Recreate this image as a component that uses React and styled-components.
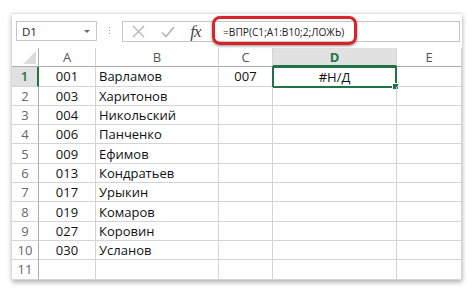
import React from "react";
import styled, { createGlobalStyle } from "styled-components";

const Global = createGlobalStyle`
  body {
    margin: 0;
    background: #fff;
    font-family: "Open Sans", "Liberation Sans", sans-serif;
  }
`;

const Page = styled.div`
  width: 474px;
  height: 293px;
  padding: 13px 0 0 12px;
  box-sizing: border-box;
  overflow: hidden;
`;

const Window = styled.div`
  width: 450px;
  background: #fff;
  box-shadow: 0 2px 5px rgba(0, 0, 0, 0.35);
`;

const Toolbar = styled.div`
  height: 35px;
  display: flex;
  align-items: flex-start;
  padding: 7px 2px 0 4px;
  box-sizing: border-box;
  border-top: 1px solid #e4e4e4;
`;

const NameBox = styled.div`
  width: 81px;
  height: 20px;
  box-sizing: border-box;
  border: 1px solid #c6c6c6;
  display: flex;
  align-items: center;
  justify-content: space-between;
  padding: 0 6px 0 5px;
  font-size: 11.5px;
  color: #222;
`;

const Caret = styled.span`
  width: 0;
  height: 0;
  border-left: 3px solid transparent;
  border-right: 3px solid transparent;
  border-top: 3px solid #666;
`;

const Dots = styled.div`
  width: 25px;
  display: flex;
  flex-direction: column;
  align-items: center;
  gap: 2px;
  padding-top: 6px;

  span {
    width: 1px;
    height: 1px;
    background: #999;
  }
`;

const FormulaBox = styled.div`
  flex: 1;
  height: 21px;
  box-sizing: border-box;
  border: 1px solid #c6c6c6;
  display: flex;
  align-items: center;
`;

const IconBtn = styled.div`
  width: ${(p) => p.$w}px;
  height: 19px;
  display: flex;
  align-items: center;
  justify-content: center;
`;

const Fx = styled.span`
  font-family: "Liberation Serif", serif;
  font-style: italic;
  font-size: 17px;
  color: #444;
  letter-spacing: -1px;
`;

const Highlight = styled.div`
  position: relative;
  margin-left: 5px;
  padding-left: 8px;
  font-size: 10.2px;
  color: #222;
  white-space: nowrap;

  &::before {
    content: "";
    position: absolute;
    left: -3px;
    top: -9px;
    width: 145px;
    height: 29px;
    box-sizing: border-box;
    border: 3px solid #d9232b;
    border-radius: 8px;
    box-shadow: 0 1px 3px rgba(0, 0, 0, 0.45);
  }
`;

const Sheet = styled.div`
  display: grid;
  grid-template-columns: 27px 57px 123px 54px 124px 1fr;
  grid-auto-rows: 19.3px;
`;

const ColHead = styled.div`
  display: flex;
  align-items: center;
  justify-content: center;
  font-size: 13px;
  color: ${(p) => (p.$active ? "#217346" : "#555")};
  font-weight: ${(p) => (p.$active ? 700 : 400)};
  background: ${(p) => (p.$active ? "#e1e1e1" : "#fff")};
  border-right: 1px solid #d4d4d4;
  border-bottom: ${(p) => (p.$active ? "2px solid #217346" : "1px solid #ababab")};
  box-sizing: border-box;
`;

const Corner = styled.div`
  position: relative;
  border-right: 1px solid #ababab;
  border-bottom: 1px solid #ababab;
  box-sizing: border-box;

  &::after {
    content: "";
    position: absolute;
    right: 2px;
    bottom: 2px;
    border-left: 13px solid transparent;
    border-bottom: 13px solid #dcdcdc;
  }
`;

const RowHead = styled.div`
  display: flex;
  align-items: center;
  justify-content: center;
  font-size: 13px;
  color: ${(p) => (p.$active ? "#217346" : "#666")};
  font-weight: ${(p) => (p.$active ? 600 : 400)};
  background: ${(p) => (p.$active ? "#e1e1e1" : "#fff")};
  border-right: ${(p) => (p.$active ? "2px solid #217346" : "1px solid #ababab")};
  border-bottom: 1px solid #d4d4d4;
  box-sizing: border-box;
`;

const Cell = styled.div`
  position: relative;
  display: flex;
  align-items: center;
  justify-content: ${(p) => (p.$left ? "flex-start" : "center")};
  padding-left: ${(p) => (p.$left ? "3px" : "0")};
  font-size: 13px;
  color: #111;
  border-right: 1px solid #d4d4d4;
  border-bottom: 1px solid #d4d4d4;
  box-sizing: border-box;
  white-space: nowrap;
`;

const Selected = styled(Cell)`
  border: 2px solid #217346;
  margin: -1px 0 -1px -1px;

  &::after {
    content: "";
    position: absolute;
    right: -4px;
    bottom: -4px;
    width: 5px;
    height: 5px;
    background: #217346;
    border: 1px solid #fff;
  }
`;

const rows = [
  ["001", "Варламов"],
  ["003", "Харитонов"],
  ["004", "Никольский"],
  ["006", "Панченко"],
  ["009", "Ефимов"],
  ["013", "Кондратьев"],
  ["017", "Урыкин"],
  ["019", "Комаров"],
  ["027", "Коровин"],
  ["030", "Усланов"],
  ["", ""],
];

export default function App() {
  return (
    <Page>
      <Global />
      <Window>
        <Toolbar>
          <NameBox>
            D1
            <Caret />
          </NameBox>
          <Dots>
            <span />
            <span />
            <span />
          </Dots>
          <FormulaBox>
            <IconBtn $w={31}>
              <svg width="13" height="13" viewBox="0 0 13 13">
                <path d="M1 1L12 12M12 1L1 12" stroke="#b4b4b4" strokeWidth="1.3" fill="none" />
              </svg>
            </IconBtn>
            <IconBtn $w={27}>
              <svg width="14" height="12" viewBox="0 0 14 12">
                <path d="M1 6.5L5 10.5L13 1" stroke="#b4b4b4" strokeWidth="1.6" fill="none" />
              </svg>
            </IconBtn>
            <IconBtn $w={29}>
              <Fx>fx</Fx>
            </IconBtn>
            <Highlight>=ВПР(С1;А1:В10;2;ЛОЖЬ)</Highlight>
          </FormulaBox>
        </Toolbar>
        <Sheet>
          <Corner />
          <ColHead>A</ColHead>
          <ColHead>B</ColHead>
          <ColHead>C</ColHead>
          <ColHead $active>D</ColHead>
          <ColHead>E</ColHead>
          {rows.map(([num, name], i) => (
            <React.Fragment key={i}>
              <RowHead $active={i === 0}>{i + 1}</RowHead>
              <Cell>{num}</Cell>
              <Cell $left>{name}</Cell>
              <Cell>{i === 0 ? "007" : ""}</Cell>
              {i === 0 ? <Selected>#Н/Д</Selected> : <Cell />}
              <Cell />
            </React.Fragment>
          ))}
        </Sheet>
      </Window>
    </Page>
  );
}
